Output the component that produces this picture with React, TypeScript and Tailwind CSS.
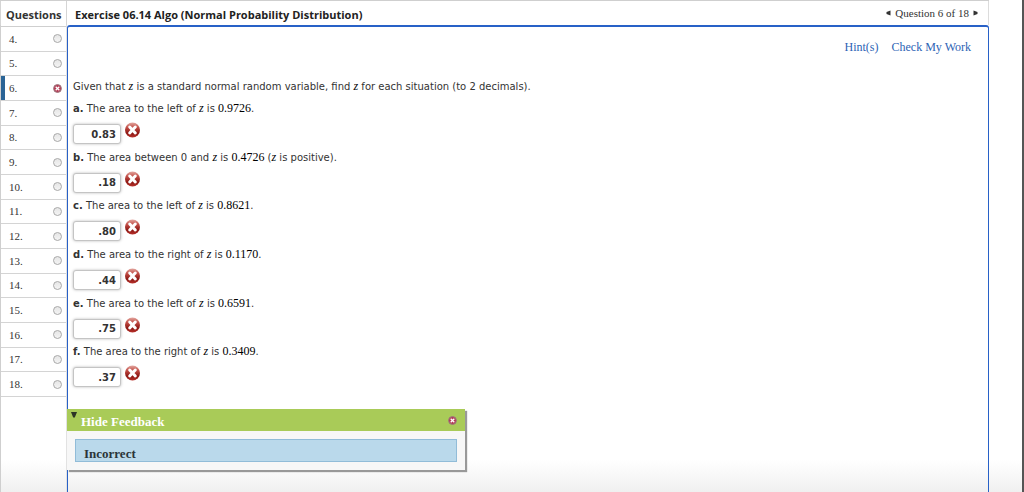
import { useId } from "react";

type Part = {
  letter: string;
  before: string;
  value: string;
  answer: string;
  positive?: boolean;
};

const questions = [4, 5, 6, 7, 8, 9, 10, 11, 12, 13, 14, 15, 16, 17, 18];
const current = 6;

const parts: Part[] = [
  { letter: "a", before: "The area to the left of", value: "0.9726", answer: "0.83" },
  { letter: "b", before: "The area between 0 and", value: "0.4726", answer: ".18", positive: true },
  { letter: "c", before: "The area to the left of", value: "0.8621", answer: ".80" },
  { letter: "d", before: "The area to the right of", value: "0.1170", answer: ".44" },
  { letter: "e", before: "The area to the left of", value: "0.6591", answer: ".75" },
  { letter: "f", before: "The area to the right of", value: "0.3409", answer: ".37" },
];

function Z() {
  return <i className="font-['Liberation_Serif',serif] text-[12px] text-black">z</i>;
}

function WrongIcon() {
  const id = useId();
  return (
    <svg viewBox="0 0 16 16" className="h-4 w-4 shrink-0" role="img" aria-label="Incorrect">
      <defs>
        <linearGradient id={id} x1="0" y1="0" x2="0" y2="1">
          <stop offset="0" stopColor="#e3a8a1" />
          <stop offset="0.35" stopColor="#c04a43" />
          <stop offset="0.7" stopColor="#8c1713" />
          <stop offset="1" stopColor="#b8322c" />
        </linearGradient>
      </defs>
      <circle cx="7.5" cy="8" r="7.5" fill={`url(#${id})`} />
      <path
        d="M4.7 5 10.3 11M10.3 5 4.7 11"
        stroke="#fff"
        strokeWidth="3"
        strokeLinecap="round"
      />
    </svg>
  );
}

function SmallWrongIcon() {
  return (
    <svg viewBox="0 0 9 9" className="h-[9px] w-[9px] shrink-0" aria-hidden="true">
      <circle cx="4.5" cy="4.5" r="3.9" fill="#b63a54" stroke="#9b7a80" strokeWidth="1" />
      <path d="M2.7 2.7 6.3 6.3M6.3 2.7 2.7 6.3" stroke="#fff" strokeWidth="1.3" />
    </svg>
  );
}

function Sidebar() {
  return (
    <nav
      aria-label="Questions"
      className="w-[67px] shrink-0 border-x border-l-[#cfcfcf] border-r-[#e2e2e2] pt-px"
    >
      <ol className="grid h-[371px] auto-rows-fr border-t border-[#cfcfcf]">
        {questions.map((n) => (
          <li key={n} className="border-b border-[#d4d4d4]">
            <a
              href={`#question-${n}`}
              aria-current={n === current ? "page" : undefined}
              className={`flex h-full items-center justify-between pr-1 text-[11px] leading-4 ${
                n === current ? "border-l-4 border-[#2a6496] pl-1" : "pl-2"
              }`}
            >
              {n}.
              {n === current ? (
                <SmallWrongIcon />
              ) : (
                <span className="h-[9px] w-[9px] rounded-full border border-[#a8a8a8] bg-linear-to-b from-[#e6e6e6] to-[#f4f4f4]" />
              )}
            </a>
          </li>
        ))}
      </ol>
    </nav>
  );
}

function Answer({ part }: { part: Part }) {
  const id = `answer-${part.letter}`;
  return (
    <div>
      <label htmlFor={id} className="block text-[10px] leading-4 whitespace-nowrap">
        <b>{part.letter}.</b> {part.before} <Z /> is{" "}
        <span className="font-['Liberation_Serif',serif] text-[12px] text-black">{part.value}</span>
        {part.positive ? (
          <>
            {" "}
            (<Z /> is positive)
          </>
        ) : null}
        .
      </label>
      <div className="mt-[5px] flex items-start gap-1">
        <input
          id={id}
          type="text"
          defaultValue={part.answer}
          className="mt-[2px] h-5 w-12 rounded-[3px] border border-[#c4c4c4] bg-white pr-1 text-right text-[10px] font-bold shadow-[0_0_3px_#bbb]"
        />
        <WrongIcon />
      </div>
    </div>
  );
}

function Feedback() {
  return (
    <section className="mt-[17px] -ml-px w-[398px] max-w-full bg-[#f7f7f7] font-['Liberation_Serif',serif] text-[13px] font-bold shadow-[2px_2px_1px_#999]">
      <div className="flex h-[22px] items-center justify-between bg-[#a9cb58] pr-2">
        <button type="button" className="flex gap-1 pl-1 text-white">
          <svg viewBox="0 0 6 6" className="mt-1 h-[6px] w-[6px]" aria-hidden="true">
            <path d="M0 0h6L3.8 5.5H2.2z" fill="#2c3426" />
          </svg>
          <span className="mt-1 leading-5">Hide Feedback</span>
        </button>
        <SmallWrongIcon />
      </div>
      <div className="px-2 py-2">
        <p className="h-[23px] border border-[#91bcd8] bg-[#bad9eb] px-2 pt-1 leading-5 text-[#2b3438]">
          Incorrect
        </p>
      </div>
    </section>
  );
}

export default function App() {
  return (
    <div className="flex min-h-screen bg-[linear-gradient(to_top,#f0f0f0,#fff_32px)] font-['Liberation_Serif',serif] text-[#333]">
      <div className="mr-[33px] flex min-w-0 flex-1 flex-col border-t border-[#cfcfcf]">
        <header className="flex h-6 shrink-0 items-center border-r border-[#dcdcdc]">
          <h2 className="flex h-full w-[67px] shrink-0 items-center border-x border-[#d5d5d5] pt-1 pl-[5px] font-['Open_Sans',sans-serif] text-[11px] leading-4 font-bold">
            Questions
          </h2>
          <h1 className="flex-1 pt-1 pl-2 font-['Open_Sans',sans-serif] text-[11px] leading-4 font-bold whitespace-nowrap text-[#222]">
            Exercise 06.14 Algo (Normal Probability Distribution)
          </h1>
          <div className="flex items-center gap-1 pr-[10px] text-[11px] leading-4">
            <button type="button" aria-label="Previous question">
              <svg viewBox="0 0 5 6" className="h-[6px] w-[5px]" aria-hidden="true">
                <path d="M4.5 0.5v5L0.5 4V2z" fill="#333" />
              </svg>
            </button>
            Question 6 of 18
            <button type="button" aria-label="Next question">
              <svg viewBox="0 0 5 6" className="h-[6px] w-[5px]" aria-hidden="true">
                <path d="M0.5 0.5v5l4-1.5V2z" fill="#333" />
              </svg>
            </button>
          </div>
        </header>
        <div className="flex flex-1">
          <Sidebar />
          <main className="min-w-0 flex-1 rounded-t-[3px] border-x border-t-2 border-[#2861c7]">
            <div className="flex justify-end gap-[13px] pt-3 pr-[17px] text-[12px] leading-4 text-[#2d63b5]">
              <a href="#hints">Hint(s)</a>
              <a href="#check">Check My Work</a>
            </div>
            <div className="mt-[23px] pl-[5px] font-['DejaVu_Sans',sans-serif]">
              <p className="text-[10px] leading-4">
                Given that <Z /> is a standard normal random variable, find <Z /> for each situation
                (to 2 decimals).
              </p>
              <div className="mt-[5px] grid h-[292px] auto-rows-fr">
                {parts.map((part) => (
                  <Answer key={part.letter} part={part} />
                ))}
              </div>
            </div>
            <Feedback />
          </main>
        </div>
      </div>
      <div className="w-[2px] bg-[#555]" />
    </div>
  );
}
